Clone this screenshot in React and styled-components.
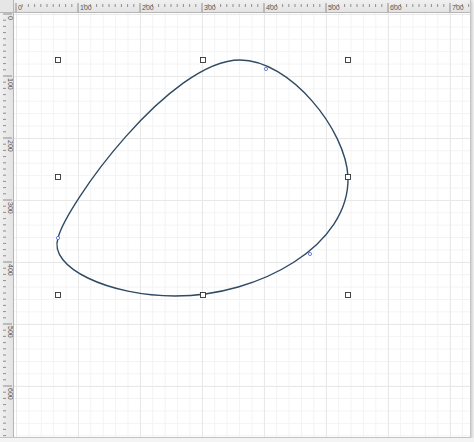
import styled, { createGlobalStyle } from 'styled-components'

const GlobalStyle = createGlobalStyle`
  html, body { margin: 0; padding: 0; background: #f4f4f4; }
  body { font-family: "Liberation Sans", Arial, sans-serif; }
`

const ORIGIN_X = 16
const ORIGIN_Y = 14
const SCALE = 0.62
const RULER_W = 14
const RULER_H = 13
const CANVAS_W = 456
const CANVAS_H = 424

const Frame = styled.div`
  width: 470px;
  height: 437px;
  display: flex;
  flex-direction: column;
  background: #fff;
  border-right: 1px solid #c4c4c4;
  border-bottom: 1px solid #c4c4c4;
  box-shadow: 1px 1px 3px rgba(0, 0, 0, 0.2);
`

const TopRow = styled.div`
  display: flex;
  height: ${RULER_H}px;
  flex: none;
`

const Corner = styled.div`
  width: ${RULER_W}px;
  height: ${RULER_H}px;
  background: #e6e6e6;
  border-right: 1px solid #b5b5b5;
  border-bottom: 1px solid #b5b5b5;
  box-sizing: border-box;
`

const Body = styled.div`
  display: flex;
  flex: 1;
  min-height: 0;
`

const RulerSvg = styled.svg`
  display: block;
  flex: none;
  background: linear-gradient(${(p) => (p.$vertical ? '90deg' : '180deg')}, #f0f0f0, #e3e3e3);
  text {
    font-family: "Liberation Sans", Arial, sans-serif;
    font-size: 7px;
    fill: #555;
  }
`

const Canvas = styled.div`
  position: relative;
  flex: 1;
  background-color: #fff;
  background-image:
    linear-gradient(to right, #e8e8e8 1px, transparent 1px),
    linear-gradient(to bottom, #e8e8e8 1px, transparent 1px),
    linear-gradient(to right, #f3f3f3 1px, transparent 1px),
    linear-gradient(to bottom, #f3f3f3 1px, transparent 1px);
  background-size: 62px 62px, 62px 62px, 12.4px 12.4px, 12.4px 12.4px;
  background-position: ${ORIGIN_X - RULER_W}px ${ORIGIN_Y - RULER_H}px;
`

const Drawing = styled.svg`
  display: block;
  width: 100%;
  height: 100%;
`

const HRuler = () => {
  const ticks = []
  for (let u = -20; u <= 740; u += 10) {
    const x = ORIGIN_X + u * SCALE - RULER_W
    const major = u % 100 === 0
    ticks.push(
      <line
        key={u}
        x1={x}
        x2={x}
        y1={major ? 3 : 4}
        y2={major ? RULER_H - 1 : 7}
        stroke='#777'
        strokeWidth='0.8'
      />
    )
    if (major && u >= 0)
      ticks.push(
        <text key={'t' + u} x={x + 2} y={9.5}>
          {u}
        </text>
      )
  }
  return (
    <RulerSvg width={CANVAS_W} height={RULER_H}>
      {ticks}
      <line x1='0' x2={CANVAS_W} y1={RULER_H - 0.5} y2={RULER_H - 0.5} stroke='#b5b5b5' />
    </RulerSvg>
  )
}

const VRuler = () => {
  const ticks = []
  for (let u = -10; u <= 680; u += 10) {
    const y = ORIGIN_Y + u * SCALE - RULER_H
    const major = u % 100 === 0
    ticks.push(
      <line
        key={u}
        y1={y}
        y2={y}
        x1='3'
        x2={major ? 12 : 6}
        stroke='#777'
        strokeWidth='0.8'
      />
    )
    if (major && u >= 0)
      ticks.push(
        <text key={'t' + u} transform={`translate(7.5 ${y + 2}) rotate(90)`}>
          {u}
        </text>
      )
  }
  return (
    <RulerSvg $vertical width={RULER_W} height={CANVAS_H}>
      {ticks}
      <line x1={RULER_W - 0.5} x2={RULER_W - 0.5} y1='0' y2={CANVAS_H} stroke='#b5b5b5' />
    </RulerSvg>
  )
}

const handles = [
  [58, 60], [203, 60], [348, 60],
  [58, 177], [348, 177],
  [58, 295], [203, 295], [348, 295],
]

const points = [
  [266, 69],
  [310, 254],
  [58, 238],
]

const shape =
  'M 58 238 C 66 205, 170 60, 240 60 ' +
  'C 290 60, 346 130, 348 177 ' +
  'C 350 245, 260 296, 175 296 ' +
  'C 110 296, 48 268, 58 238 Z'

const App = () => (
  <>
    <GlobalStyle />
    <Frame>
      <TopRow>
        <Corner />
        <HRuler />
      </TopRow>
      <Body>
        <VRuler />
        <Canvas>
          <Drawing viewBox={`${RULER_W} ${RULER_H} ${CANVAS_W} ${CANVAS_H}`}>
            <path d={shape} fill='none' stroke='#2e4a64' strokeWidth='1.4' />
            {points.map(([x, y]) => (
              <circle key={x} cx={x} cy={y} r='1.6' fill='#fff' stroke='#4a5fd0' strokeWidth='0.8' />
            ))}
            {handles.map(([x, y]) => (
              <rect
                key={x + '-' + y}
                x={x - 2.5}
                y={y - 2.5}
                width='5'
                height='5'
                fill='#fff'
                stroke='#333'
                strokeWidth='0.9'
              />
            ))}
          </Drawing>
        </Canvas>
      </Body>
    </Frame>
  </>
)

export default App
